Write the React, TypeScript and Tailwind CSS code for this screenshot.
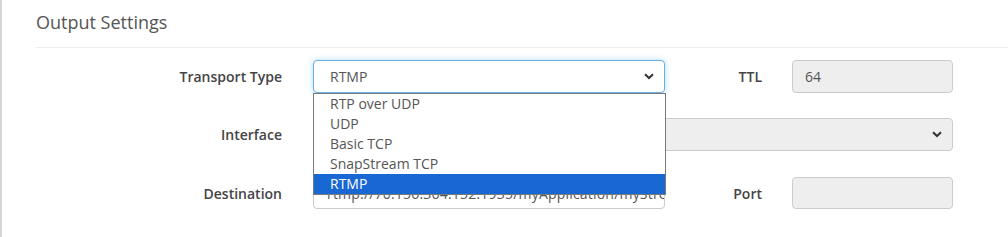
const options = ['RTP over UDP', 'UDP', 'Basic TCP', 'SnapStream TCP', 'RTMP'];

function Chevron() {
  return (
    <svg width="10" height="7" viewBox="0 0 10 7" className="shrink-0">
      <path d="M1 1.2 L5 5 L9 1.2" fill="none" stroke="#333" strokeWidth="2" />
    </svg>
  );
}

export default function App() {
  return (
    <div
      className="h-[237px] w-[1008px] overflow-hidden bg-white border-l-2 border-[#d2d6d8] text-[#555]"
      style={{ fontFamily: '"Open Sans", "Liberation Sans", sans-serif' }}
    >
      {/* Header */}
      <div className="pl-[34px] pt-[9px]">
        <h3 className="text-[18px] leading-[26px] text-[#555] font-normal">Output Settings</h3>
        <div className="mt-[12px] border-t border-[#eee]" />
      </div>

      {/* Form */}
      <div className="pl-[34px] pt-[12px]">
        <div className="grid grid-cols-[277px_352px_127px_161px] auto-rows-[33px] gap-y-[25px] text-[14px]">
          <label className="flex items-center justify-end pr-[31px] font-semibold text-[#444]">Transport Type</label>
          <div className="relative">
            <div className="flex h-full items-center justify-between rounded-[4px] border border-[#66afe9] bg-white pl-[16px] pr-[10px] shadow-[0_0_6px_rgba(102,175,233,0.45)]">
              <span>RTMP</span>
              <Chevron />
            </div>
            <ul className="absolute left-0 top-[33px] z-10 w-[353px] border border-[#7a7a7a] bg-white">
              {options.map((o) => (
                <li
                  key={o}
                  className={
                    o === 'RTMP'
                      ? 'h-[20px] pl-[16px] leading-[20px] bg-[#1967d2] text-white'
                      : 'h-[20px] pl-[16px] leading-[20px] text-[#555]'
                  }
                >
                  {o}
                </li>
              ))}
            </ul>
          </div>
          <label className="flex items-center justify-end pr-[30px] font-semibold text-[#444]">TTL</label>
          <div className="flex items-center rounded-[4px] border border-[#ccc] bg-[#eee] pl-[12px]">64</div>

          <label className="flex items-center justify-end pr-[31px] font-semibold text-[#444]">Interface</label>
          <div className="col-span-3 flex items-center justify-end rounded-[4px] border border-[#ccc] bg-[#eee] pr-[10px]">
            <Chevron />
          </div>

          <label className="mt-[1px] flex items-center justify-end pr-[31px] font-semibold text-[#444]">Destination</label>
          <div className="mt-[1px] flex items-center overflow-hidden whitespace-nowrap rounded-[4px] border border-[#ccc] bg-white pl-[13px] tracking-[0.2px]">
            rtmp://70.156.364.152:1935/myApplication/myStream
          </div>
          <label className="mt-[1px] flex items-center justify-end pr-[30px] font-semibold text-[#444]">Port</label>
          <div className="mt-[1px] rounded-[4px] border border-[#ccc] bg-[#eee]" />
        </div>
      </div>
    </div>
  );
}
